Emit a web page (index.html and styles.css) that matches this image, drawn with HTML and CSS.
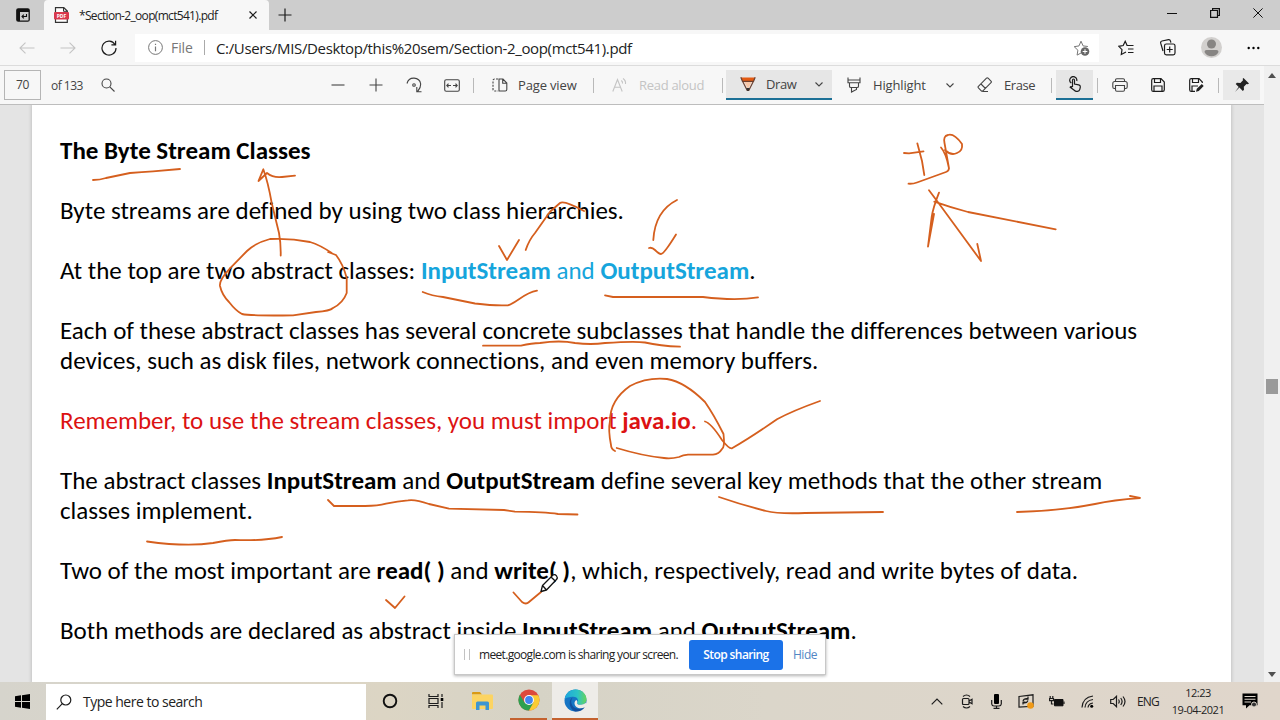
FILE: index.html
```html
<!DOCTYPE html>
<html lang="en">
<head>
  <meta charset="UTF-8">
  <meta name="viewport" content="width=device-width, initial-scale=1.0">
  <title>*Section-2_oop(mct541).pdf</title>
  <link rel="stylesheet" href="styles.css">
</head>
<body>
  <!-- Tab strip -->
  <header class="tabs">
    <div class="tab-menu">
      <svg width="14" height="14" viewBox="0 0 14 14"><rect x=".8" y=".8" width="12.4" height="12.4" rx="1.5" fill="none" stroke="#111" stroke-width="1.3"/><path d="M1 1h12v3H1zM1 1h3v12H1z" fill="#111"/><path d="M10.5 6v2.5H6M7.8 6.6 6 8.5l1.8 1.9" fill="none" stroke="#111" stroke-width="1.1"/></svg>
    </div>
    <div class="tab">
      <svg width="15" height="16" viewBox="0 0 15 16"><path d="M1.5.7h8.300L13.300 4v11.300H1.500z" fill="#fff" stroke="#333" stroke-width="1.200"/><path d="M9.500.7V4.300h3.800" fill="none" stroke="#333"/><rect x="0" y="5" width="15" height="7.500" rx="1" fill="#d8394c"/><text x="7.500" y="10.900" class="pdf-label">PDF</text></svg>
      <span class="tab-title">*Section-2_oop(mct541).pdf</span>
      <svg class="tab-close" width="8" height="8" viewBox="0 0 8 8"><path d="M.5.5l7 7M7.5.5l-7 7" class="ink-dark"/></svg>
    </div>
    <svg class="tab-new" width="14" height="14" viewBox="0 0 14 14"><path d="M7 .5v13M.5 7h13" class="ink-dark"/></svg>
    <div class="window-buttons">
      <svg width="10" height="10" viewBox="0 0 10 10"><path d="M0 5.500h10" stroke="#111"/></svg>
      <svg width="10" height="10" viewBox="0 0 10 10"><path d="M.6 2.500h6.900v6.900H.6zM2.600 2.500V.6h6.800v6.900H7.500" fill="none" stroke="#111" stroke-width="1.200"/></svg>
      <svg width="10" height="10" viewBox="0 0 10 10"><path d="M.4.4l9.200 9.200M9.600.4L.4 9.600" stroke="#111"/></svg>
    </div>
  </header>

  <!-- Address bar -->
  <nav class="address">
    <div class="nav-button"><svg width="16" height="12" viewBox="0 0 16 12"><path d="M15.500 6H1M6.500.7L1 6l5.500 5.300" class="ink-off"/></svg></div>
    <div class="nav-button"><svg width="16" height="12" viewBox="0 0 16 12"><path d="M.5 6H15M9.500.7L15 6l-5.500 5.300" class="ink-off"/></svg></div>
    <div class="nav-button"><svg width="16" height="16" viewBox="0 0 16 16"><path d="M14 4.500A7 7 0 1 0 15 8M14.600.8v4.100h-4.200" class="ink-dark"/></svg></div>
    <div class="url-box">
      <svg width="15" height="15" viewBox="0 0 15 15"><circle cx="7.500" cy="7.500" r="6.900" fill="none" stroke="#777"/><path d="M7.500 6.500v4.700M7.500 3.700V5" stroke="#777" stroke-width="1.200"/></svg>
      <span class="scheme">File</span>
      <span class="url">C:/Users/MIS/Desktop/this%20sem/Section-2_oop(mct541).pdf</span>
      <svg class="star-add" width="17" height="16" viewBox="0 0 17 16"><path d="M8 13l-3.900 2.100.8-4.900L1.200 6.700l4.800-.8L8 1.200l2.100 4.700 4.800.6" fill="none" stroke="#777" stroke-linejoin="round"/><circle cx="12" cy="11.500" r="4.300" fill="#666"/><path d="M12 9.200v4.600M9.700 11.500h4.600" stroke="#fff"/></svg>
    </div>
    <div class="nav-tools">
      <svg width="16" height="16" viewBox="0 0 16 16"><path d="M8.500 5.500H15.500M10 9h5.500M10 12.500h5.500M9 5.300L7.200 1.300 5.200 5.500.8 6.300l3.200 3.300-.7 4.900L8 12" class="ink-dark"/></svg>
      <svg width="17" height="17" viewBox="0 0 17 17"><path d="M4 12L1.700 4.200Q1.300 2.400 3 2l6.500-1.300q1.600-.2 2 1.400l.4 1.600" class="ink-dark"/><rect x="5.500" y="5" width="10.500" height="10.800" rx="1.800" class="ink-dark"/><path d="M10.700 7.500v6M7.700 10.500h6" class="ink-dark"/></svg>
      <svg width="21" height="21" viewBox="0 0 21 21"><circle cx="10.500" cy="10.500" r="10.500" fill="#d2d0ce"/><circle cx="10.500" cy="7" r="4.500" fill="#878583"/><path d="M3.500 15q0-2 2-2h10q2 0 2 2-2.300 4.300-7 4.300T3.500 15z" fill="#878583"/></svg>
      <svg width="13" height="4" viewBox="0 0 13 4"><circle cx="1.700" cy="2" r="1.200"/><circle cx="6.500" cy="2" r="1.200"/><circle cx="11.300" cy="2" r="1.200"/></svg>
    </div>
  </nav>

  <div class="viewer">
    <div class="viewer-main">
      <!-- PDF toolbar -->
      <div class="toolbar">
        <div class="page-number">70</div>
        <div class="page-total">of 133</div>
        <div class="tool find"><svg width="14" height="14" viewBox="0 0 14 14"><circle cx="5.500" cy="5.500" r="4.500" class="ink"/><path d="M8.800 8.800l4.700 4.700" class="ink"/></svg></div>
        <div class="tool zoom"><svg width="14" height="14" viewBox="0 0 14 14"><path d="M.5 7h13" class="ink"/></svg></div>
        <div class="tool zoom"><svg width="14" height="14" viewBox="0 0 14 14"><path d="M.5 7h13M7 .5v13" class="ink"/></svg></div>
        <div class="tool zoom"><svg width="16" height="16" viewBox="0 0 16 16"><path d="M1 6.500A7 7 0 0 1 14.700 7q.2 3.500-3 7.300M10.800 10v4.800h4.700" class="ink"/><circle cx="8" cy="8" r="1.300" class="ink"/></svg></div>
        <div class="tool fit"><svg width="16" height="13" viewBox="0 0 16 13"><rect x=".7" y=".7" width="14.600" height="11.600" rx="1.500" class="ink"/><path d="M2.800 6.500H7M9 6.500h4.200M4.500 4.700L2.800 6.500l1.700 1.800M11.500 4.700l1.700 1.800-1.700 1.800" class="ink"/></svg></div>
        <i class="sep after-fit"></i>
        <div class="tool labelled page-view"><svg width="16" height="14" viewBox="0 0 16 14"><path d="M6 1H2.500Q1 1 1 2.500v8.800Q1 13 2.500 13H6" class="ink" stroke-dasharray="2 1.300"/><path d="M7 1h4l3.800 4v6.500q0 1.500-1.500 1.500H7zM10.700 1v4.300h4" class="ink"/></svg><span>Page view</span></div>
        <i class="sep"></i>
        <div class="tool labelled read"><svg width="16" height="16" viewBox="0 0 16 16"><path d="M.8 14.500L5.500 2.500l4.700 12M2.500 10.300h6M9.300 3.500q1.500 1.200 1.200 3M11 1.500q3 2 2.500 5.500" class="ink-off"/></svg><span>Read aloud</span></div>
        <i class="sep"></i>
        <div class="tool labelled draw active"><svg width="16" height="16" viewBox="0 0 16 16"><path d="M1 1.500h14L13.800 5H2.200z" fill="#e35a12"/><path d="M4 5.500h8L8 13z" fill="#f8c7a8"/><path d="M.8 1.200L2.500 5.300h11l1.700-4.100M2.700 5.500l4.500 9h1.600l4.500-9" fill="none" stroke="#6c4030" stroke-width="1.200"/><path d="M6.200 12h3.600L8.500 15h-1z" fill="#333"/></svg><span>Draw</span><svg class="caret" width="8" height="5" viewBox="0 0 8 5"><path d="M.5.5L4 4 7.500.5" class="ink"/></svg></div>
        <div class="tool labelled highlight"><svg width="14" height="16" viewBox="0 0 14 16"><path d="M1 .5v5.200h12V.5M1 3h12M2.500 5.700v3.500q0 1.300 1.500 1.300h6q1.500 0 1.500-1.300V5.700M4.500 10.500V15l5-2.500v-2" class="ink"/></svg><span>Highlight</span><svg class="caret" width="8" height="5" viewBox="0 0 8 5"><path d="M.5.5L4 4 7.500.5" class="ink"/></svg></div>
        <div class="tool labelled erase"><svg width="16" height="16" viewBox="0 0 16 16"><path d="M9.500 1.200L1.400 9.300q-.8.8 0 1.600l2.900 2.900q.8.800 1.600 0L14 5.700q.8-.8 0-1.600l-2.900-2.900q-.8-.8-1.600 0zM4 7l4.500 4.500M5.500 14.500H11" class="ink"/></svg><span>Erase</span></div>
        <i class="sep"></i>
        <div class="tool touch active"><svg width="14" height="17" viewBox="0 0 14 17"><path d="M4.500 11V4.200q0-1.200 1-1.200t1 1.200V8l4.200.9q1.800.4 1.600 2.200l-.5 2.300q-.4 1.900-2.300 1.900H8.300q-1 0-1.700-.8L2.200 11.200q.5-1.200 2.300-.2M3.300 7A3.500 3.500 0 1 1 8.700 5" class="ink-dark"/></svg></div>
        <i class="sep after-touch"></i>
        <div class="tool print"><svg width="16" height="14" viewBox="0 0 16 14"><path d="M3.500 3.500V2q0-1.300 1.300-1.300h6.400q1.300 0 1.300 1.300v1.500M3.500 10.500H2.300Q.8 10.500.8 9V5.500q0-2 2-2h10.400q2 0 2 2V9q0 1.500-1.500 1.500h-1.200M3.500 7.500h9v4.300q0 1.400-1.300 1.400H4.800q-1.300 0-1.300-1.400z" class="ink"/></svg></div>
        <div class="tool save"><svg width="14" height="14" viewBox="0 0 14 14"><path d="M2.300.7H10L13.300 4v7.700q0 1.600-1.600 1.600H2.300Q.7 13.300.7 11.700V2.300Q.7.7 2.300.7zM3.500.7v3.800h6V.7M3 13V8h8v5" class="ink-dark"/></svg></div>
        <div class="tool save-as"><svg width="15" height="14" viewBox="0 0 15 14"><path d="M6 13.300H2.300Q.7 13.300.7 11.700V2.300Q.7.7 2.300.7H10L13.300 4v1M3.500.7v3.800h6V.7M3 13V8h6" class="ink-dark"/><path d="M7 13.800l.8-3 5-4.800 1.900 1.900-4.900 5z" fill="#222"/></svg></div>
        <i class="sep"></i>
        <div class="tool pin"><svg width="16" height="16" viewBox="0 0 16 16"><path d="M9.500 1l5.500 5.500-1.200.8-1.300-.2-2.700 2.700.2 3-1.200 1.200-3.400-3.400L1 15l3.700-5-3-3 1.200-1.200 3.500.1L9 3.300l-.3-1.500z" fill="#222"/></svg></div>
      </div>

      <!-- Document page -->
      <div class="canvas">
        <article class="page">
          <h1>The Byte Stream Classes</h1>
          <p>Byte streams are defined by using two class hierarchies.</p>
          <p>At the top are two abstract classes: <span class="blue"><b>InputStream</b> and <b>OutputStream</b></span>.</p>
          <p>Each of these abstract classes has several concrete subclasses that handle the differences between various<br>devices, such as disk files, network connections, and even memory buffers.</p>
          <p class="red">Remember, to use the stream classes, you must import <b>java.io</b>.</p>
          <p>The abstract classes <b>InputStream</b> and <b>OutputStream</b> define several key methods that the other stream<br>classes implement.</p>
          <p>Two of the most important are <b>read( )</b> and <b>write( )</b>, which, respectively, read and write bytes of data.</p>
          <p>Both methods are declared as abstract inside <b>InputStream</b> and <b>OutputStream</b>.</p>
          <p>They are overridden by derived stream classes.</p>
        </article>
      </div>
    </div>
    <div class="scrollbar">
      <svg width="8" height="5" viewBox="0 0 8 5"><path d="M4 0l4 5H0z" fill="#505050"/></svg>
      <div class="thumb"></div>
      <svg width="8" height="5" viewBox="0 0 8 5"><path d="M4 5l4-5H0z" fill="#505050"/></svg>
    </div>
  </div>

  <!-- Taskbar -->
  <footer class="taskbar">
    <div class="start"><svg width="15" height="15" viewBox="0 0 15 15"><path d="M0 2.200L6 1.300V7H0zM7 1.200L15 0v7H7zM0 8h6v5.700L0 12.800zM7 8h8v7l-8-1.200z"/></svg></div>
    <div class="search"><svg width="16" height="16" viewBox="0 0 16 16"><circle cx="9.800" cy="6" r="5" class="ink-dark"/><path d="M6.300 9.700L.8 15.300" class="ink-dark"/></svg><span>Type here to search</span></div>
    <div class="task"><svg width="16" height="16" viewBox="0 0 16 16"><circle cx="8" cy="8" r="6.300" fill="none" stroke="#111" stroke-width="1.900"/></svg></div>
    <div class="task"><svg width="16" height="14" viewBox="0 0 16 14"><path d="M1 0v2.500h9V0M1 14v-2.500h9V14M1 4.500h9v5H1zM14 0v3M14 8v6" class="ink-dark"/><path d="M12.700 4h2.600v3h-2.600z"/></svg></div>
    <div class="task explorer"><svg width="21" height="18" viewBox="0 0 21 18"><path d="M0 1q0-1 1-1h7l2 2.500H0z" fill="#d99a15"/><path d="M0 2.500h20q1 0 1 1V16q0 1-1 1H1q-1 0-1-1z" fill="#fcd462"/><path d="M4 18v-7q0-1.500 1.500-1.500h10Q17 9.500 17 11v7h-3.500v-4.500h-6V18z" fill="#3d96d2"/></svg></div>
    <div class="task chrome"><svg width="22" height="22" viewBox="0 0 22 22"><circle cx="11" cy="11" r="10.500" fill="#dd4a3c"/><path d="M1.900 5.700A10.500 10.500 0 0 0 11 21.500L15.800 13.500 11 15.500 6.500 13.500z" fill="#2da050"/><path d="M11 6.200h9.300A10.500 10.500 0 0 1 11 21.500l4.500-8z" fill="#fbcc34"/><circle cx="11" cy="11" r="4.900" fill="#fff"/><circle cx="11" cy="11" r="3.900" fill="#4285f0"/></svg></div>
    <div class="task edge"><svg width="23" height="23" viewBox="0 0 23 23"><defs><linearGradient id="wave" x1="0" x2="1"><stop offset="0" stop-color="#1fa5dd"/><stop offset=".6" stop-color="#2cc4c4"/><stop offset="1" stop-color="#67d45a"/></linearGradient></defs><circle cx="11.500" cy="11.500" r="11" fill="#1675c4"/><path d="M.6 10.500C1.400 4 6 .5 11.500.5c6.500 0 11 4.700 11 9.800 0 3.500-2.500 5.500-5.500 5.500-2.500 0-4.500-.8-3.500-2.500 1.500-2.500-.5-5.500-4-5.500-4 0-8 1-8.900 2.700z" fill="url(#wave)"/><path d="M8.500 8.500c-3 4-.5 10 4.500 11 3 .6 6-.4 8-1.500A11 11 0 0 1 11 22.500C5 20 4 11 8.500 8.500z" fill="#124f9e"/><path d="M13.200 13.700c-.8 1.500 2 2.600 5 1.900 1.500-.3 3-1.200 3.800-2.200l1 3-2 1.600c-4.500 2.500-10 1-10.500-3.500 0-1.500.6-2.700 1.700-3.500 1.100.5 1.400 1.800 1 2.700z" fill="#eeece8"/></svg></div>
    <div class="tray">
      <div class="tray-icon w28"><svg width="12" height="7" viewBox="0 0 12 7"><path d="M.7 6.300L6 1l5.300 5.300" class="ink-dark"/></svg></div>
      <div class="tray-icon w31"><svg width="12" height="15" viewBox="0 0 12 15"><path d="M2 2.500Q5.500-.5 9 2.500M2 12.500q3.500 3 7 0M2.500 4.500H7q1 0 1 1v4q0 1-1 1H2.500q-1 0-1-1v-4q0-1 1-1zM8 7l3-1.700v4.500L8 8" class="ink-dark"/></svg></div>
      <div class="tray-icon w28"><svg width="11" height="15" viewBox="0 0 11 15"><rect x="3" y="0" width="5" height="10" rx="1"/><path d="M.7 6v4Q1 12 3 12h5q2 0 2.300-2V6M5.500 12v2.500M2.500 14.300h6" class="ink-dark"/></svg></div>
      <div class="tray-icon w32"><svg width="16" height="15" viewBox="0 0 16 15"><path d="M1 2.500L15 .8v11.500L1 13zM5 7q1-3 5-2.300M10 2.500v2.700H7.500M10 6.500Q9 9.300 5.300 8.700M5 10.500V8.200h2.500" class="ink-dark"/><circle cx="12.500" cy="11.500" r="3.300" fill="#f09a17"/></svg></div>
      <div class="tray-icon w30"><svg width="16" height="11" viewBox="0 0 16 11"><path d="M5.500 3.500H14v6.300H5.500z" fill="#111" stroke="#111"/><path d="M14.500 5.500h1v2.500h-1z"/><path d="M1.200 0v3M3.800 0v3M.5 2.500h4v2.200h-4zM2.500 5v3h2" class="ink-dark"/></svg></div>
      <div class="tray-icon w31"><svg width="13" height="13" viewBox="0 0 13 13"><path d="M1 12.500Q1.500 2.500 12 1M4 12.500Q4.500 5.500 12 4.500M7 12.500Q7.500 8.500 12 8" class="ink-dark"/><circle cx="10.700" cy="11.300" r="1.500"/></svg></div>
      <div class="tray-icon w29"><svg width="16" height="13" viewBox="0 0 16 13"><path d="M.7 4.500h2.500L6.500 1.300v10.400L3.200 8.500H.7zM8.500 4.500q1.500 2 0 4M10.700 3q2.800 3.500 0 7M13 1.500q4 5 0 10" class="ink-dark"/></svg></div>
      <span class="lang">ENG</span>
      <div class="clock"><span>12:23</span><span>19-04-2021</span></div>
      <svg class="notes" width="16" height="16" viewBox="0 0 16 16"><path d="M.5.5h15v11.700H7.500L4 15.500v-3.300H.5z"/><path d="M2.500 3.500h11M2.500 6.200h11M2.500 9h6.500" stroke="#ddd5cb" stroke-width="1.100"/><circle cx="12" cy="11.500" r="2.500" fill="#333" stroke="#ddd5cb"/></svg>
    </div>
  </footer>

  <!-- Pen strokes drawn on the document -->
  <svg class="strokes" width="1280" height="720" viewBox="0 0 1280 720">
    <path d="M93 180Q100 180 106 178L130 173Q142 172 153 171.300L180 169"/>
    <path d="M280.700 255.500Q281 244 279 233L271.700 203Q268 182 263.300 169.300L258.500 181 267 173Q273 178 282 177L295 175.700"/>
    <path d="M331.700 253Q320 245 310 242 290 238 270 239 255 243 247 251L230 268.300Q219 280 220 286 222 295 229 302 236 311 242 314 251 316 293 315.300L316 312Q330 311 333 308 343 303 346.700 293V278Q343 264 336 255L328 252"/>
    <path d="M422.700 292Q432 296 443 297L475 303.500Q495 306 508 305.300C516 303 524 293 537 290.700"/>
    <path d="M499 246L507 260 519 240M525.700 250Q529 240 535 233L550 211.700 560 203Q564 200 584 211"/>
    <path d="M653.300 240Q655 211 677 200M649 248Q652 247 655 250 659 254 661 254 664 254 676 234.500"/>
    <path d="M605 295.300L613 297H703Q736 301 758 297.300"/>
    <path d="M483 345.700H521Q532 343 540 343 560 340 575 343 591 345 605 343 635 341 645 342.500 660 346 680 346.700"/>
    <path d="M904 153L909 153.300 923.500 151.300M917.300 143.300L922 161 924.300 175M941 147.500Q946 153 949 168.300L944.500 143Q943 136 948 135 954 133 962 144 963 151 957 153 951 156 945 150M949 168Q949 171 946 172L917 182.500Q913 184 908.500 183.700"/>
    <path d="M929 190.300L940 205 981 261 977.300 244M939 192.700Q933 208 931.700 217L928 246.700 934 214M934.300 201.700Q952 208 968 212L1055.700 229.300"/>
    <path d="M615 451Q611 449 611 445 608 430 610 421 610 400 630 386 647 377 667 379 685 382 705 402 714 415 723.500 434 725 447 722 449 719 454 713 454.700H688Q683 455 679 457 671 459 664 458 643 456 616.700 448"/>
    <path d="M705 421.500Q711 423 722 440 729 449 732 448.300 750 438 777 419.300 792 411 820 401"/>
    <path d="M328 500L334 506H365Q378 506 386 503.700 398 501 408 500.300 415 499 429 504L449 508.700 504 510 515 511.700Q545 512 558 514L577.500 514.500"/>
    <path d="M147 541.500Q187 547 213 543 228 540 235 540 262 541 282 537"/>
    <path d="M719 497Q742 505 766 511 778 514 805 513L883 512M1017 512Q1060 511 1095 504 1113 500 1140 498L1130 496"/>
    <path d="M386 600L395 608 404.500 596.500M513.500 592.500L522 602Q526 605 529 602L541 592"/>
    <path class="pencil" d="M541 591.500l1.500-6L553 575q2-1 3.500.8t.2 3.500L546.500 590zM551 577l3.700 3.500M542.500 585.500l4 4.500"/>
  </svg>

  <!-- Screen sharing notice -->
  <div class="share">
    <i class="grip"></i>
    <span class="share-text">meet.google.com is sharing your screen.</span>
    <button class="stop">Stop sharing</button>
    <a class="hide">Hide</a>
  </div>
</body>
</html>
```
FILE: styles.css
```css
* {
  box-sizing: border-box;
}
body {
  margin: 0;
  width: 1280px;
  height: 720px;
  overflow: hidden;
  display: flex;
  flex-direction: column;
  position: relative;
  font-family: 'Segoe UI', 'Open Sans', 'Noto Sans', sans-serif;
  color: #222;
}
svg {
  display: block;
  flex: none;
}
.ink, .ink-dark, .ink-off {
  fill: none;
  stroke: #444;
  stroke-width: 1.1;
}
.ink-dark {
  stroke: #1c1c1c;
  stroke-width: 1.2;
}
.ink-off {
  stroke: #c4c4c4;
}

/* tabs */
.tabs {
  height: 30px;
  flex: none;
  display: flex;
  align-items: center;
  background: #cdcdcd;
}
.tab-menu {
  width: 44px;
  padding-left: 16px;
}
.tab {
  width: 225px;
  height: 30px;
  display: flex;
  align-items: center;
  padding: 0 12px 0 10px;
  background: #f7f7f7;
  border-radius: 4px 4px 0 0;
}
.pdf-label {
  font-size: 5px;
  font-weight: 700;
  fill: #fff;
  text-anchor: middle;
}
.tab-title {
  margin-left: 10px;
  font-size: 12px;
  letter-spacing: -0.68px;
  white-space: nowrap;
}
.tab-close {
  margin-left: auto;
}
.tab-new {
  margin-left: 9px;
}
.window-buttons {
  margin-left: auto;
  padding: 0 17px 4px 0;
  display: flex;
  gap: 33px;
}

/* address bar */
.address {
  height: 36px;
  flex: none;
  display: flex;
  align-items: center;
  padding-left: 6px;
  background: #f7f7f7;
  border-bottom: 1px solid #dcdcdc;
}
.nav-button {
  width: 41px;
  display: flex;
  justify-content: center;
}
.url-box {
  width: 964px;
  height: 28px;
  margin-left: 6px;
  padding: 0 9px 0 13px;
  display: flex;
  align-items: center;
  background: #fff;
  font-size: 15px;
  white-space: nowrap;
}
.scheme {
  width: 34px;
  margin-left: 8px;
  color: #777;
  border-right: 1px solid #aaa;
  line-height: 15px;
  font-size: 14px;
  letter-spacing: -0.1px;
}
.url {
  margin-left: 11px;
  letter-spacing: -0.35px;
}
.star-add {
  margin-left: auto;
}
.nav-tools {
  flex: 1;
  display: flex;
  align-items: center;
  justify-content: space-between;
  padding: 0 20px 0 19px;
}

/* viewer */
.viewer {
  height: 616px;
  flex: none;
  display: flex;
}
.viewer-main {
  width: 1264px;
}
.toolbar {
  height: 39px;
  display: flex;
  align-items: center;
  padding-left: 4px;
  background: #f7f7f7;
  border-bottom: 1px solid #bdbdbd;
  font-size: 13px;
  color: #444;
  white-space: nowrap;
}
.page-number {
  width: 37px;
  height: 30px;
  border: 1px solid #b5b5b5;
  font-size: 12px;
  line-height: 28px;
  text-align: center;
  letter-spacing: -0.4px;
}
.page-total {
  width: 40px;
  margin-left: 10px;
  font-size: 12px;
  letter-spacing: -0.5px;
}
.tool {
  height: 30px;
  display: flex;
  align-items: center;
  justify-content: center;
}
.find {
  width: 34px;
  margin-right: 194px;
}
.zoom {
  width: 38px;
}
.fit {
  width: 37px;
}
.sep {
  width: 1px;
  height: 15px;
  background: #b9b9b9;
}
.after-fit {
  margin-left: 3px;
}
.labelled {
  justify-content: flex-start;
  letter-spacing: -0.15px;
}
.page-view {
  width: 119px;
  padding-left: 18px;
  gap: 10px;
}
.read {
  width: 128px;
  padding-left: 18px;
  gap: 11px;
  color: #c4c4c4;
  letter-spacing: -0.3px;
}
.active {
  background: #e6e6e6;
  border-bottom: 2px solid #1c7096;
}
.draw {
  width: 106px;
  margin-left: 3px;
  padding: 0 9px 0 14px;
  gap: 10px;
  letter-spacing: -0.4px;
}
.caret {
  margin-left: auto;
}
.highlight {
  width: 130px;
  padding: 0 8px 0 15px;
  gap: 12px;
}
.erase {
  width: 89px;
  padding-left: 15px;
  gap: 11px;
  letter-spacing: -0.4px;
}
.touch {
  width: 37px;
  margin-left: 4px;
}
.after-touch {
  margin-left: 4px;
}
.print, .save-as {
  width: 44px;
}
.save {
  width: 32px;
}
.pin {
  width: 37px;
  margin-left: 4px;
  background: #e9e9e9;
}
.canvas {
  height: 577px;
  padding: 0 33px 0 32px;
  background: #e4e4e4;
  overflow: hidden;
}
.page {
  height: 577px;
  padding: 31px 28px 0;
  background: #fff;
  box-shadow: 0 0 3px 1px #c4c4c4;
  font-family: Calibri, Carlito, Lato, sans-serif;
  font-size: 25px;
  line-height: 30px;
  font-variant-ligatures: none;
  color: #000;
  white-space: nowrap;
}
.page h1 {
  margin: 0 0 30px;
  font-size: 25px;
  font-weight: 700;
}
.page p {
  margin: 0 0 30px;
}
.blue {
  color: #16a5dc;
}
.page .red {
  color: #dc1212;
}
.scrollbar {
  width: 16px;
  background: #f0f0f0;
  display: flex;
  flex-direction: column;
  align-items: center;
  padding: 7px 0 5px;
}
.thumb {
  width: 12px;
  height: 15px;
  margin: 301px 0 auto;
  background: #9a9a9a;
}

/* taskbar */
.taskbar {
  height: 38px;
  flex: none;
  display: flex;
  align-items: center;
  background: linear-gradient(90deg, #d6d4cc, #dcd5c4 30%, #d6d3c6 42%, #dbd6ca 60%, #e0d6cb);
}
.start {
  width: 46px;
  padding-left: 15px;
}
.search {
  width: 320px;
  height: 36px;
  margin: 1px 1px 0 0;
  padding-left: 10px;
  display: flex;
  align-items: center;
  gap: 11px;
  background: #fff;
  font-size: 14px;
  letter-spacing: -0.5px;
}
.task {
  width: 46px;
  height: 38px;
  display: flex;
  align-items: center;
  justify-content: center;
}
.chrome {
  width: 37px;
  margin: 0 5px 0 5px;
  border-bottom: 2px solid #c4622f;
}
.edge {
  background: #eeece8;
  border-bottom: 2px solid #c4622f;
}
.tray {
  margin-left: auto;
  display: flex;
  align-items: center;
  padding-right: 22px;
}
.tray-icon {
  display: flex;
  justify-content: center;
}
.w28 { width: 28px; }
.w29 { width: 29px; }
.w30 { width: 30px; }
.w31 { width: 31px; }
.w32 { width: 32px; }
.lang {
  width: 34px;
  margin-left: 5px;
  font-size: 12px;
  letter-spacing: -0.9px;
}
.clock {
  width: 54px;
  display: flex;
  flex-direction: column;
  align-items: center;
  font-size: 11px;
  line-height: 17px;
  letter-spacing: -0.5px;
}
.notes {
  margin-left: 17px;
}

/* overlays */
.strokes {
  position: absolute;
  top: 0;
  left: 0;
  fill: none;
  stroke: #d55f1e;
  stroke-width: 1.8;
  stroke-linecap: round;
  stroke-linejoin: round;
}
.pencil {
  fill: #fff;
  stroke: #111;
  stroke-width: 1.3;
}
.share {
  position: absolute;
  left: 454px;
  top: 634px;
  width: 372px;
  height: 41px;
  padding: 0 9px;
  display: flex;
  align-items: center;
  background: #fff;
  border: 1px solid #c8c8c8;
  box-shadow: 0 1px 3px rgba(0, 0, 0, 0.3);
  font-size: 12px;
  white-space: nowrap;
}
.grip {
  flex: none;
  width: 6px;
  height: 11px;
  border: solid #c2c2c2;
  border-width: 0 1px;
}
.share-text {
  flex: none;
  width: 210px;
  margin-left: 9px;
  letter-spacing: -0.67px;
}
.stop {
  flex: none;
  width: 94px;
  height: 30px;
  padding: 0;
  border: none;
  border-radius: 3px;
  background: #1b72e8;
  color: #fff;
  font-family: inherit;
  font-size: 12px;
  font-weight: 600;
  letter-spacing: -0.6px;
}
.hide {
  margin-left: 10px;
  color: #5286c4;
  letter-spacing: -0.5px;
}
```
